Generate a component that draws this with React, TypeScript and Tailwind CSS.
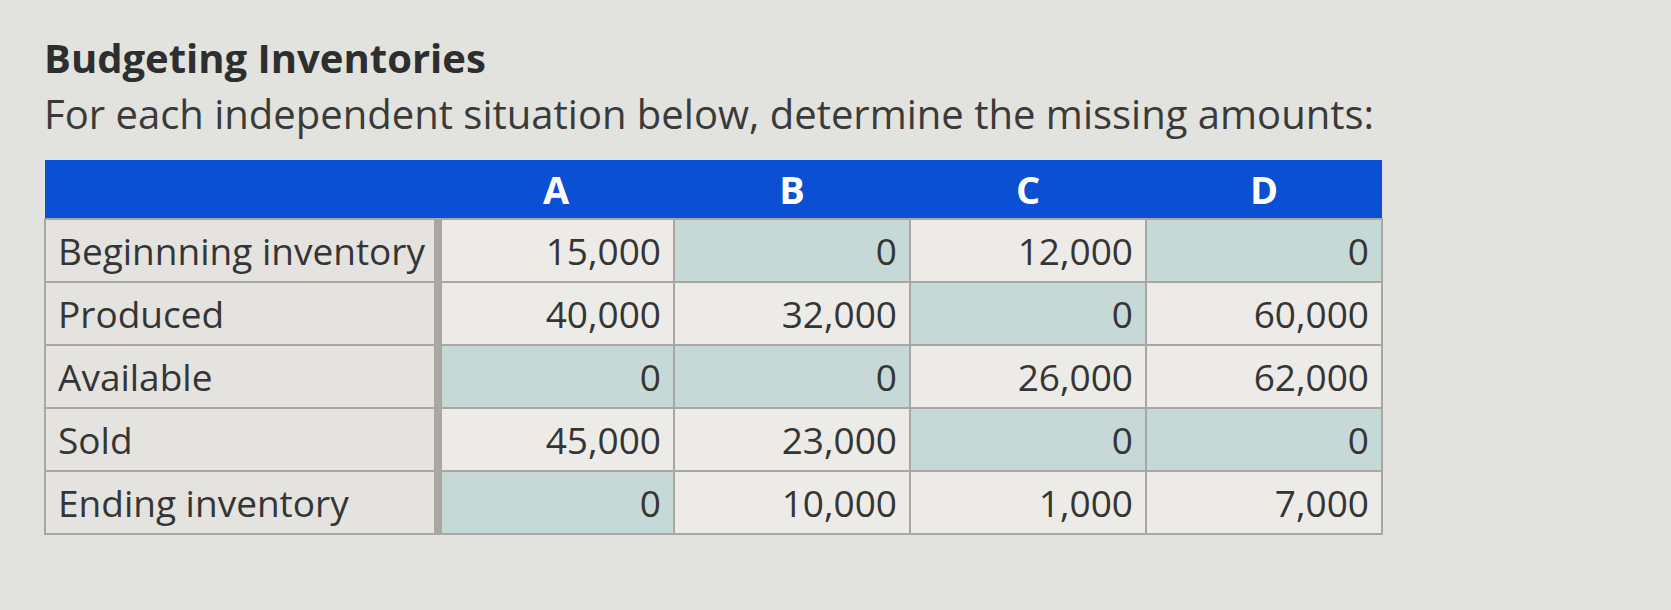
const rows: { label: string; values: string[]; shaded: boolean[] }[] = [
  { label: 'Beginnning inventory', values: ['15,000', '0', '12,000', '0'], shaded: [false, true, false, true] },
  { label: 'Produced', values: ['40,000', '32,000', '0', '60,000'], shaded: [false, false, true, false] },
  { label: 'Available', values: ['0', '0', '26,000', '62,000'], shaded: [true, true, false, false] },
  { label: 'Sold', values: ['45,000', '23,000', '0', '0'], shaded: [false, false, true, true] },
  { label: 'Ending inventory', values: ['0', '10,000', '1,000', '7,000'], shaded: [true, false, false, false] },
]

export default function App() {
  return (
    <div
      className="h-[610px] w-[1671px] overflow-hidden bg-[#e2e2de] pl-[44px] pt-[32px] text-[#333]"
      style={{ fontFamily: '"Open Sans", "Noto Sans", sans-serif' }}
    >
      <h1 className="text-[40px] font-bold leading-[52px] text-[#2e2e2e]">Budgeting Inventories</h1>
      <p className="mt-[4px] text-[40px] leading-[52px] text-[#3a3a3a]">
        For each independent situation below, determine the missing amounts:
      </p>

      <table className="mt-[20px] w-[1337px] table-fixed border-collapse text-[37px] text-[#353535]">
        <colgroup>
          <col className="w-[393px]" />
          <col className="w-[236px]" />
          <col className="w-[236px]" />
          <col className="w-[236px]" />
          <col className="w-[236px]" />
        </colgroup>
        <thead>
          <tr className="h-[59px] bg-[#0b4fd2] text-white">
            <th></th>
            {['A', 'B', 'C', 'D'].map((h) => (
              <th key={h} className="text-center text-[38px] font-bold">
                {h}
              </th>
            ))}
          </tr>
        </thead>
        <tbody>
          {rows.map((r) => (
            <tr key={r.label} className="h-[63px]">
              <td className="whitespace-nowrap border-2 border-r-[8px] border-[#a9a7a2] bg-[#e4e3df] px-[12px] leading-none">
                {r.label}
              </td>
              {r.values.map((v, i) => (
                <td
                  key={i}
                  className={`border-2 border-[#a9a7a2] px-[12px] text-right leading-none ${
                    r.shaded[i] ? 'bg-[#c7d9d6]' : 'bg-[#ecebe7]'
                  }`}
                >
                  {v}
                </td>
              ))}
            </tr>
          ))}
        </tbody>
      </table>
    </div>
  )
}
